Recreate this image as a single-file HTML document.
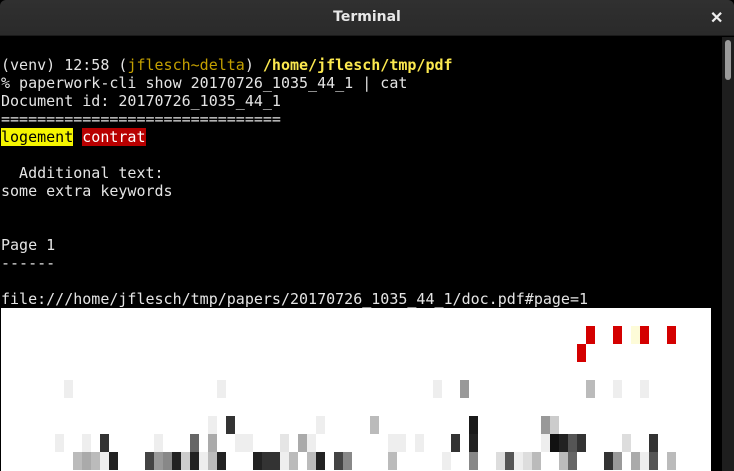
<!DOCTYPE html>
<html><head><meta charset="utf-8"><style>
*{margin:0;padding:0;box-sizing:border-box}
body{width:734px;height:471px;overflow:hidden;background:#000;position:relative;font-family:"DejaVu Sans Mono","Liberation Mono",monospace}
#tb{position:absolute;left:0;top:0;width:734px;height:36px;background:linear-gradient(#303030,#2a2a2a);border-radius:6px 6px 0 0;border-bottom:1px solid #1a1a1a}
#tb .t{position:absolute;left:0;right:0;top:9px;text-align:center;color:#e8e8e8;font:bold 14px "DejaVu Sans","Liberation Sans",sans-serif}
#tb .x{position:absolute;left:710px;top:8px;color:#eee;font:bold 16px "Liberation Sans",sans-serif}
#term{position:absolute;left:1px;top:56px;color:#e4e4e4;font-size:15px;line-height:18px;white-space:pre}
.g{color:#c4a000}.y{color:#fce94f;font-weight:bold}
.hy{background:#f5f500;color:#000}.hr{background:#b80000;color:#fff}
#sb{position:absolute;left:722px;top:37px;width:12px;height:434px;background:#1e1e1e}
#th{position:absolute;left:725px;top:40px;width:6px;height:40px;background:#9a9a9a;border-radius:3px}
#img{position:absolute;left:1px;top:308px;width:710px;height:163px;background:#fff}
.b{position:absolute;width:9px;height:18px}
</style></head><body>
<div id="tb"><div class="t">Terminal</div><div class="x">✕</div></div>
<div id="term">(venv) 12:58 (<span class="g">jflesch~delta</span>) <span class="y">/home/jflesch/tmp/pdf</span>
% paperwork-cli show 20170726_1035_44_1 | cat
Document id: 20170726_1035_44_1
===============================
<span class="hy">logement</span> <span class="hr">contrat</span>

  Additional text:
some extra keywords


Page 1
------

file:///home/jflesch/tmp/papers/20170726_1035_44_1/doc.pdf#page=1</div>
<div id="img"></div>
<div style="position:absolute;left:0;top:0">
<div class="b" style="left:586px;top:326px;background:#d40000"></div>
<div class="b" style="left:613px;top:326px;background:#d40000"></div>
<div class="b" style="left:631px;top:326px;background:#fdfbd8"></div>
<div class="b" style="left:640px;top:326px;background:#d40000"></div>
<div class="b" style="left:667px;top:326px;background:#d40000"></div>
<div class="b" style="left:577px;top:344px;background:#d40000"></div>
<div class="b" style="left:64px;top:380px;background:#eee"></div>
<div class="b" style="left:217px;top:380px;background:#eee"></div>
<div class="b" style="left:433px;top:380px;background:#eee"></div>
<div class="b" style="left:460px;top:380px;background:#999"></div>
<div class="b" style="left:586px;top:380px;background:#bbb"></div>
<div class="b" style="left:613px;top:380px;background:#eee"></div>
<div class="b" style="left:640px;top:380px;background:#eee"></div>
<div class="b" style="left:208px;top:416px;background:#eee"></div>
<div class="b" style="left:226px;top:416px;background:#333"></div>
<div class="b" style="left:316px;top:416px;background:#eee"></div>
<div class="b" style="left:370px;top:416px;background:#bbb"></div>
<div class="b" style="left:469px;top:416px;background:#1a1a1a"></div>
<div class="b" style="left:541px;top:416px;background:#999"></div>
<div class="b" style="left:550px;top:416px;background:#ccc"></div>
<div class="b" style="left:55px;top:434px;background:#eee"></div>
<div class="b" style="left:82px;top:434px;background:#eee"></div>
<div class="b" style="left:100px;top:434px;background:#333"></div>
<div class="b" style="left:154px;top:434px;background:#eee"></div>
<div class="b" style="left:190px;top:434px;background:#666"></div>
<div class="b" style="left:208px;top:434px;background:#aaa"></div>
<div class="b" style="left:235px;top:434px;width:18px;background:#eee"></div>
<div class="b" style="left:280px;top:434px;background:#e5e5e5"></div>
<div class="b" style="left:298px;top:434px;background:#aaa"></div>
<div class="b" style="left:307px;top:434px;background:#eee"></div>
<div class="b" style="left:388px;top:434px;width:18px;background:#eee"></div>
<div class="b" style="left:415px;top:434px;background:#eee"></div>
<div class="b" style="left:451px;top:434px;background:#333"></div>
<div class="b" style="left:469px;top:434px;background:#222"></div>
<div class="b" style="left:541px;top:434px;background:#eee"></div>
<div class="b" style="left:550px;top:434px;background:#111"></div>
<div class="b" style="left:559px;top:434px;background:#222"></div>
<div class="b" style="left:568px;top:434px;background:#555"></div>
<div class="b" style="left:577px;top:434px;background:#333"></div>
<div class="b" style="left:622px;top:434px;background:#ddd"></div>
<div class="b" style="left:649px;top:434px;background:#333"></div>
<div class="b" style="left:73px;top:452px;background:#bbb"></div>
<div class="b" style="left:82px;top:452px;background:#aaa"></div>
<div class="b" style="left:91px;top:452px;background:#bbb"></div>
<div class="b" style="left:100px;top:452px;background:#eee"></div>
<div class="b" style="left:109px;top:452px;background:#222"></div>
<div class="b" style="left:145px;top:452px;background:#444"></div>
<div class="b" style="left:154px;top:452px;background:#999"></div>
<div class="b" style="left:163px;top:452px;background:#888"></div>
<div class="b" style="left:172px;top:452px;background:#222"></div>
<div class="b" style="left:181px;top:452px;background:#ccc"></div>
<div class="b" style="left:190px;top:452px;background:#222"></div>
<div class="b" style="left:199px;top:452px;background:#eee"></div>
<div class="b" style="left:208px;top:452px;background:#bbb"></div>
<div class="b" style="left:217px;top:452px;background:#222"></div>
<div class="b" style="left:253px;top:452px;background:#222"></div>
<div class="b" style="left:262px;top:452px;background:#333"></div>
<div class="b" style="left:271px;top:452px;background:#333"></div>
<div class="b" style="left:280px;top:452px;background:#eee"></div>
<div class="b" style="left:289px;top:452px;background:#bbb"></div>
<div class="b" style="left:307px;top:452px;background:#bbb"></div>
<div class="b" style="left:316px;top:452px;background:#222"></div>
<div class="b" style="left:334px;top:452px;background:#444"></div>
<div class="b" style="left:343px;top:452px;background:#888"></div>
<div class="b" style="left:388px;top:452px;background:#bbb"></div>
<div class="b" style="left:442px;top:452px;background:#eee"></div>
<div class="b" style="left:469px;top:452px;background:#888"></div>
<div class="b" style="left:496px;top:452px;background:#ddd"></div>
<div class="b" style="left:505px;top:452px;background:#555"></div>
<div class="b" style="left:514px;top:452px;background:#eee"></div>
<div class="b" style="left:523px;top:452px;background:#ddd"></div>
<div class="b" style="left:532px;top:452px;background:#bbb"></div>
<div class="b" style="left:559px;top:452px;background:#bbb"></div>
<div class="b" style="left:568px;top:452px;background:#666"></div>
<div class="b" style="left:604px;top:452px;background:#333"></div>
<div class="b" style="left:613px;top:452px;background:#999"></div>
<div class="b" style="left:631px;top:452px;background:#aaa"></div>
<div class="b" style="left:640px;top:452px;background:#eee"></div>
<div class="b" style="left:649px;top:452px;background:#555"></div>
<div class="b" style="left:667px;top:452px;background:#bbb"></div>
</div>
<div id="sb"></div><div id="th"></div>
</body></html>
